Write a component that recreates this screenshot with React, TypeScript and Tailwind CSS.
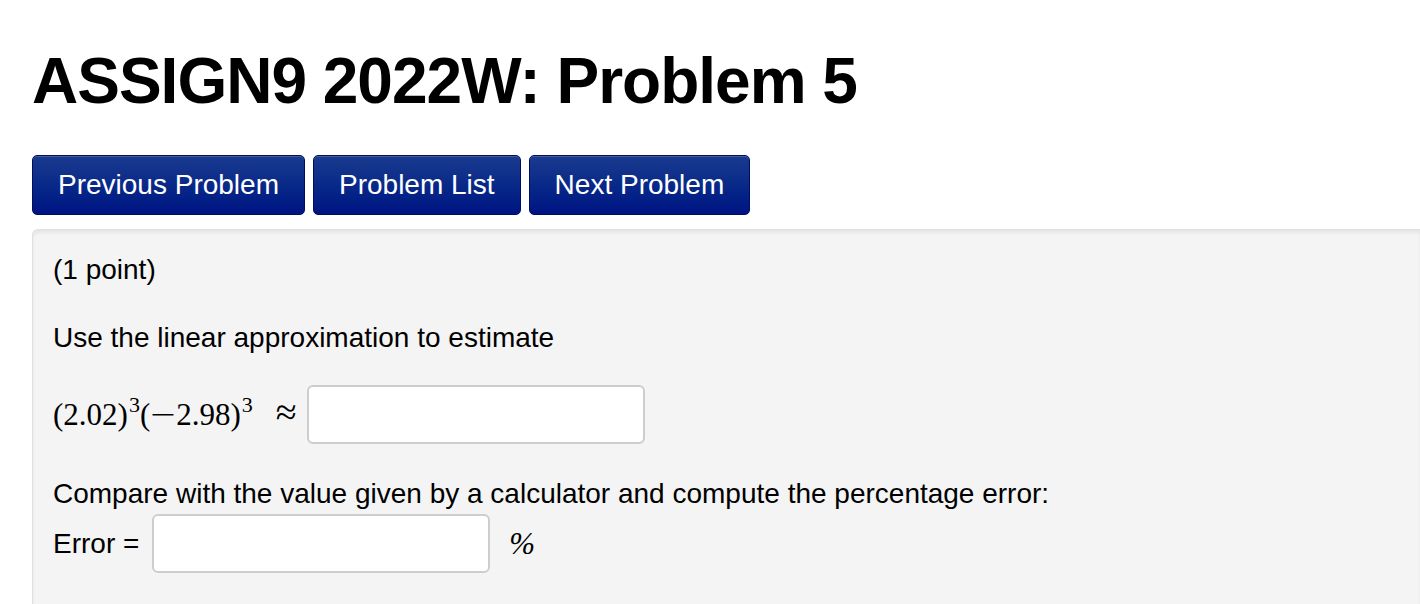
const NAV = ['Previous Problem', 'Problem List', 'Next Problem']

function AnswerBox() {
  return (
    <input
      type="text"
      className="w-[338px] h-[59px] rounded-[6px] border-2 border-[#cdcdcd] bg-white px-3 text-[28px] outline-none"
    />
  )
}

function Cube() {
  return <span className="relative -top-[13px] ml-[1px] text-[22px] leading-none">3</span>
}

export default function App() {
  return (
    <div className="min-h-[604px] bg-white pl-8 font-['Liberation_Sans',Arial,sans-serif] text-black overflow-hidden">
      {/* Heading */}
      <h1 className="pt-[41px] text-[64px] leading-[80px] font-bold tracking-[-1px]">
        ASSIGN9 2022W: Problem 5
      </h1>

      {/* Problem nav */}
      <div className="mt-[34px] flex gap-2">
        {NAV.map(label => (
          <button
            key={label}
            className="h-[60px] rounded-[5px] border border-[#000f5c] bg-gradient-to-b from-[#1a3a8e] to-[#001283] px-[25px] text-[28px] text-white shadow-[inset_0_1px_0_rgba(255,255,255,0.18)]"
          >
            {label}
          </button>
        ))}
      </div>

      {/* Problem body */}
      <div className="mt-[14px] h-[400px] rounded-tl-[6px] border-t border-l border-[#e0e0e0] bg-[#f4f4f4] pl-5 pt-5 text-[28px] leading-[40px] shadow-[inset_0_3px_3px_rgba(0,0,0,0.06)]">
        <p>(1 point)</p>

        <p className="mt-[28px]">Use the linear approximation to estimate</p>

        <div className="mt-[27px] flex items-center">
          <span className="font-['Liberation_Serif','Times_New_Roman',serif] text-[31px]">
            (2.02)<Cube />(<span className="inline-block w-[26px] scale-x-[1.45] text-center">−</span>2.98)<Cube />
            <span className="ml-[23px] text-[38px] leading-[30px]">≈</span>
          </span>
          <span className="ml-[10px]">
            <AnswerBox />
          </span>
        </div>

        <p className="mt-[30px]">
          Compare with the value given by a calculator and compute the percentage error:
        </p>

        <div className="flex items-center">
          <span>Error =</span>
          <span className="ml-[13px]">
            <AnswerBox />
          </span>
          <span className="ml-[19px] font-['Liberation_Serif','Times_New_Roman',serif] text-[31px] italic">%</span>
        </div>
      </div>
    </div>
  )
}
